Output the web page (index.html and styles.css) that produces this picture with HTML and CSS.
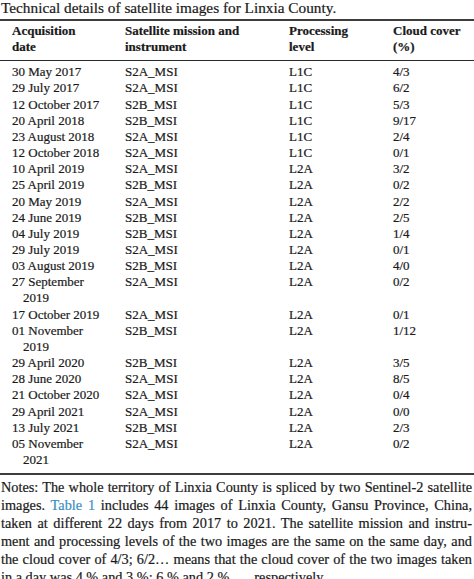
FILE: index.html
```html
<!DOCTYPE html>
<html lang="en">
<head>
<meta charset="utf-8">
<title>Technical details of satellite images for Linxia County</title>
<link rel="stylesheet" href="styles.css">
</head>
<body>
<div class="page">
  <p class="caption">Technical details of satellite images for Linxia County.</p>
  <table class="data">
    <colgroup>
      <col class="c-date"><col class="c-sat"><col class="c-level"><col class="c-cloud">
    </colgroup>
    <thead>
      <tr>
        <th class="first">Acquisition<br>date</th>
        <th>Satellite mission and<br>instrument</th>
        <th>Processing<br>level</th>
        <th>Cloud cover<br>(%)</th>
      </tr>
    </thead>
    <tbody>
      <tr class="top"><td class="first"><span class="hang">30 May 2017</span></td><td>S2A_MSI</td><td>L1C</td><td>4/3</td></tr>
      <tr><td class="first"><span class="hang">29 July 2017</span></td><td>S2A_MSI</td><td>L1C</td><td>6/2</td></tr>
      <tr><td class="first"><span class="hang">12 October 2017</span></td><td>S2B_MSI</td><td>L1C</td><td>5/3</td></tr>
      <tr><td class="first"><span class="hang">20 April 2018</span></td><td>S2B_MSI</td><td>L1C</td><td>9/17</td></tr>
      <tr><td class="first"><span class="hang">23 August 2018</span></td><td>S2A_MSI</td><td>L1C</td><td>2/4</td></tr>
      <tr><td class="first"><span class="hang">12 October 2018</span></td><td>S2A_MSI</td><td>L1C</td><td>0/1</td></tr>
      <tr><td class="first"><span class="hang">10 April 2019</span></td><td>S2A_MSI</td><td>L2A</td><td>3/2</td></tr>
      <tr><td class="first"><span class="hang">25 April 2019</span></td><td>S2B_MSI</td><td>L2A</td><td>0/2</td></tr>
      <tr><td class="first"><span class="hang">20 May 2019</span></td><td>S2A_MSI</td><td>L2A</td><td>2/2</td></tr>
      <tr><td class="first"><span class="hang">24 June 2019</span></td><td>S2B_MSI</td><td>L2A</td><td>2/5</td></tr>
      <tr><td class="first"><span class="hang">04 July 2019</span></td><td>S2B_MSI</td><td>L2A</td><td>1/4</td></tr>
      <tr><td class="first"><span class="hang">29 July 2019</span></td><td>S2A_MSI</td><td>L2A</td><td>0/1</td></tr>
      <tr><td class="first"><span class="hang">03 August 2019</span></td><td>S2B_MSI</td><td>L2A</td><td>4/0</td></tr>
      <tr><td class="first"><span class="hang">27 September<br>2019</span></td><td>S2A_MSI</td><td>L2A</td><td>0/2</td></tr>
      <tr><td class="first"><span class="hang">17 October 2019</span></td><td>S2A_MSI</td><td>L2A</td><td>0/1</td></tr>
      <tr><td class="first"><span class="hang">01 November<br>2019</span></td><td>S2B_MSI</td><td>L2A</td><td>1/12</td></tr>
      <tr><td class="first"><span class="hang">29 April 2020</span></td><td>S2B_MSI</td><td>L2A</td><td>3/5</td></tr>
      <tr><td class="first"><span class="hang">28 June 2020</span></td><td>S2A_MSI</td><td>L2A</td><td>8/5</td></tr>
      <tr><td class="first"><span class="hang">21 October 2020</span></td><td>S2A_MSI</td><td>L2A</td><td>0/4</td></tr>
      <tr><td class="first"><span class="hang">29 April 2021</span></td><td>S2A_MSI</td><td>L2A</td><td>0/0</td></tr>
      <tr><td class="first"><span class="hang">13 July 2021</span></td><td>S2B_MSI</td><td>L2A</td><td>2/3</td></tr>
      <tr class="bottom"><td class="first"><span class="hang">05 November<br>2021</span></td><td>S2A_MSI</td><td>L2A</td><td>0/2</td></tr>
    </tbody>
  </table>
  <div class="notes">
    <span class="line">Notes: The whole territory of Linxia County is spliced by two Sentinel-2 satellite</span>
    <span class="line">images. <a class="ref" href="#">Table 1</a> includes 44 images of Linxia County, Gansu Province, China,</span>
    <span class="line">taken at different 22 days from 2017 to 2021. The satellite mission and instru-</span>
    <span class="line">ment and processing levels of the two images are the same on the same day, and</span>
    <span class="line">the cloud cover of 4/3; 6/2… means that the cloud cover of the two images taken</span>
    <span class="line">in a day was 4 % and 3 %; 6 % and 2 %, … respectively.</span>
  </div>
</div>
</body>
</html>
```

FILE: styles.css
```css
html, body {
  margin: 0;
  padding: 0;
  background: #ffffff;
  overflow: hidden;
}

.page {
  width: 474px;
  margin-left: 0;
  color: #1a1a1a;
  font-family: "Liberation Serif", "Times New Roman", serif;
  -webkit-text-stroke: 0.2px #1a1a1a;
}

.caption {
  margin: 0;
  font-size: 15.3px;
  line-height: 15px;
  height: 15px;
  padding-left: 1px;
  padding-bottom: 3.7px;
}

.data {
  width: 474px;
  table-layout: fixed;
  border-collapse: collapse;
  border-top: 2px solid #3d3d3d;
  border-bottom: 2px solid #3d3d3d;
}

.c-date { width: 125px; }
.c-sat { width: 164px; }
.c-level { width: 104px; }

.data th,
.data td {
  padding: 0;
  text-align: left;
  vertical-align: top;
}

.data th {
  font-size: 13px;
  line-height: 16px;
  font-weight: 700;
  padding-top: 2.2px;
  padding-bottom: 5px;
  border-bottom: 1px solid #2a2a2a;
}

.data td {
  font-size: 13px;
  line-height: 16.15px;
}

.data th.first,
.data td.first {
  padding-left: 12px;
}

.hang {
  display: block;
  padding-left: 11px;
  text-indent: -11px;
}

.data tr.top td {
  padding-top: 3.4px;
}

.data tr.bottom td {
  padding-bottom: 5px;
}

.notes {
  margin-top: 4px;
  font-size: 14.3px;
  line-height: 17.9px;
  padding-left: 1px;
  width: 471px;
}

.line {
  display: block;
  text-align: justify;
  text-align-last: justify;
  white-space: nowrap;
}

.line:last-child {
  text-align-last: left;
}

.ref {
  color: #3a8ec4;
  -webkit-text-stroke: 0.2px #3a8ec4;
  text-decoration: none;
}
```
